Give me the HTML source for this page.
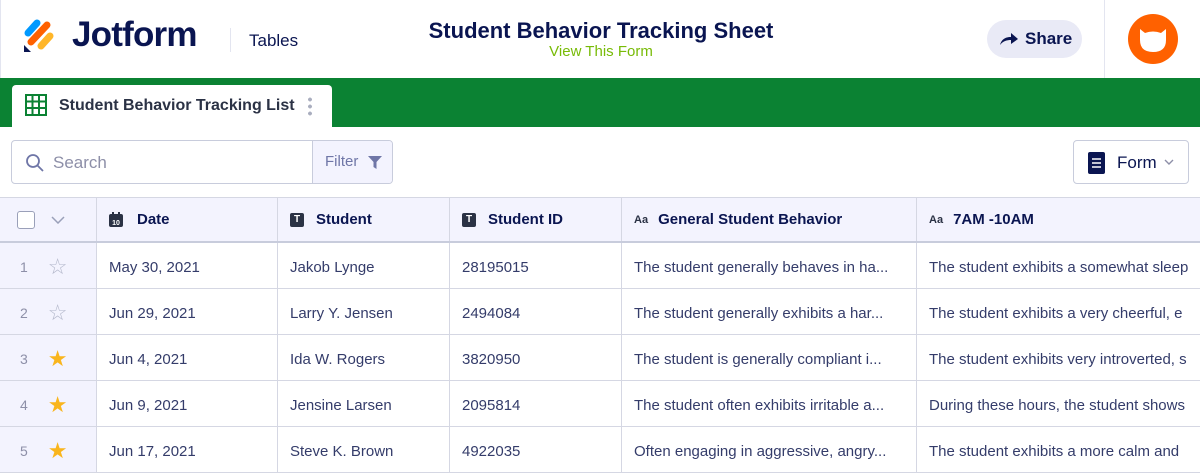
<!DOCTYPE html>
<html><head><meta charset="utf-8"><style>
*{box-sizing:border-box;margin:0;padding:0}
body{width:1200px;height:474px;overflow:hidden;background:#fff;font-family:"Liberation Sans",sans-serif;color:#0a1551;position:relative}
.hdr{position:absolute;left:0;top:0;width:1200px;height:78px;background:#fff;border-left:1px solid #e3e5f0}
.green{position:absolute;left:0;top:78px;width:1200px;height:49px;background:#0b8233}
.tab{position:absolute;left:12px;top:85px;width:320px;height:42px;background:#fff;border-radius:4px 4px 0 0}
.tbl{position:absolute;left:0;top:197px;width:1200px}
.row{position:absolute;left:0;width:1200px;height:46px;border-bottom:1px solid #d5d7e3;display:flex}
.c{height:100%;border-right:1px solid #d5d7e3;display:flex;align-items:center;padding-left:12px;padding-top:3px;font-size:15px;color:#343c6a;white-space:nowrap;overflow:hidden}
.h .c{font-weight:bold;color:#0a1551;font-size:15px;padding-top:0}
.ti{display:inline-block;width:14px;height:14px;background:#2b3245;color:#fff;font-size:10px;font-weight:bold;text-align:center;line-height:14px;border-radius:2px;margin-right:12px}
</style></head><body>
<div class="hdr">
  <svg style="position:absolute;left:22px;top:19px" width="34" height="34" viewBox="0 0 34 34">
    <line x1="5" y1="14" x2="14" y2="4" stroke="#0099ff" stroke-width="7" stroke-linecap="round"/>
    <line x1="8" y1="23" x2="24" y2="6" stroke="#ff6100" stroke-width="7" stroke-linecap="round"/>
    <line x1="18" y1="27" x2="27" y2="17" stroke="#ffb629" stroke-width="7" stroke-linecap="round"/>
    <path d="M1 26 L1 33 L8 33 Z" fill="#0a1551"/>
  </svg>
  <div style="position:absolute;left:71px;top:15px;font-size:35px;font-weight:bold;color:#0a1551;letter-spacing:-0.8px">Jotform</div>
  <div style="position:absolute;left:229px;top:28px;width:1px;height:24px;background:#e3e5f0"></div>
  <div style="position:absolute;left:248px;top:31px;font-size:17px;color:#0a1551">Tables</div>
  <div style="position:absolute;left:0;width:1200px;top:18px;text-align:center;font-size:22px;font-weight:bold;color:#0a1551">Student Behavior Tracking Sheet</div>
  <div style="position:absolute;left:0;width:1200px;top:43px;text-align:center;font-size:15px;color:#78bb07">View This Form</div>
  <div style="position:absolute;left:986px;top:20px;width:95px;height:38px;border-radius:19px;background:#e9eaf6;font-size:17px;font-weight:bold;color:#0a1551;line-height:38px;padding-left:38px">Share
    <svg style="position:absolute;left:12px;top:12px" width="20" height="14" viewBox="0 0 20 14"><path d="M1 13 C3 6 8 5 12 5 L12 1 L19 7 L12 12 L12 8 C8 8 4 9 1 13Z" fill="#0a1551"/></svg>
  </div>
  <div style="position:absolute;left:1103px;top:0;width:1px;height:78px;background:#e3e5f0"></div>
  <svg style="position:absolute;left:1127px;top:14px" width="50" height="50" viewBox="0 0 50 50"><circle cx="25" cy="25" r="25" fill="#ff6100"/><path d="M12 15 L17 19 Q25 16 33 19 L38 15 L38 26 Q38 38 25 38 Q12 38 12 26Z" fill="#fff"/></svg>
</div>
<div class="green"></div>
<div class="tab">
  <svg style="position:absolute;left:13px;top:9px" width="22" height="22" viewBox="0 0 22 22"><rect x="1" y="1" width="20" height="20" fill="none" stroke="#0b8233" stroke-width="2"/><path d="M1 7.5H21M1 14H21M7.5 1V21M14 1V21" stroke="#0b8233" stroke-width="2"/></svg>
  <div style="position:absolute;left:47px;top:12px;font-size:16px;font-weight:bold;color:#2b3245">Student Behavior Tracking List</div>
  <div style="position:absolute;left:296px;top:11px;width:4px;height:20px;background:radial-gradient(circle,#aaaebf 1.8px,transparent 2px) 0 0/4px 7px"></div>
</div>
<div style="position:absolute;left:11px;top:140px;width:382px;height:44px;border:1px solid #c8ccdc;border-radius:4px;background:#fff;overflow:hidden">
  <svg style="position:absolute;left:13px;top:12px" width="20" height="20" viewBox="0 0 20 20"><circle cx="8" cy="8" r="6" fill="none" stroke="#6f76a7" stroke-width="1.8"/><path d="M12.5 12.5L18 18" stroke="#6f76a7" stroke-width="1.8"/></svg>
  <div style="position:absolute;left:41px;top:12px;font-size:17px;color:#8d8fa8">Search</div>
  <div style="position:absolute;left:300px;top:0;width:81px;height:42px;border-left:1px solid #c8ccdc;background:#f3f3fe;font-size:15px;color:#6f76a7;line-height:42px;padding-left:12px">Filter
    <svg style="position:absolute;left:55px;top:15px" width="14" height="13" viewBox="0 0 14 13"><path d="M0 0H14L8.5 6V13L5.5 11V6Z" fill="#6f76a7"/></svg>
  </div>
</div>
<div style="position:absolute;left:1073px;top:140px;width:116px;height:44px;border:1px solid #c8ccdc;border-radius:4px;background:#fff">
  <svg style="position:absolute;left:14px;top:11px" width="17" height="22" viewBox="0 0 17 22"><rect width="17" height="22" rx="2" fill="#0a1551"/><path d="M4 7H13M4 11H13M4 15H13" stroke="#fff" stroke-width="1.6"/></svg>
  <div style="position:absolute;left:43px;top:12px;font-size:17px;color:#0a1551">Form</div>
  <svg style="position:absolute;left:90px;top:18px" width="10" height="6" viewBox="0 0 10 6"><path d="M1 1L5 5L9 1" fill="none" stroke="#8d8fa8" stroke-width="1.4"/></svg>
</div>
<div class="tbl">
  <div class="row h" style="top:0;height:46px;background:#f3f3fe;border-top:1px solid #d5d7e3;border-bottom:2px solid #c8ccdc">
    <div class="c" style="width:97px;padding-left:17px"><span style="width:18px;height:18px;border:1.5px solid #9aa0b9;border-radius:3px;background:#fff;display:inline-block"></span><svg style="margin-left:16px" width="14" height="8" viewBox="0 0 14 8"><path d="M1 1L7 7L13 1" fill="none" stroke="#9aa0b9" stroke-width="1.5"/></svg></div>
    <div class="c" style="width:181px"><svg width="14" height="15" viewBox="0 0 14 15" style="margin-right:14px"><rect y="2" width="14" height="13" rx="2" fill="#2b3245"/><rect x="3" width="2" height="4" fill="#2b3245"/><rect x="9" width="2" height="4" fill="#2b3245"/><text x="7" y="13" font-size="7" fill="#fff" text-anchor="middle" font-family="Liberation Sans">10</text></svg>Date</div>
    <div class="c" style="width:172px"><span class="ti">T</span>Student</div>
    <div class="c" style="width:172px"><span class="ti">T</span>Student ID</div>
    <div class="c" style="width:295px"><span style="font-size:11px;margin-right:10px;color:#2b3245">Aa</span>General Student Behavior</div>
    <div class="c" style="width:283px;border-right:0"><span style="font-size:11px;margin-right:10px;color:#2b3245">Aa</span>7AM -10AM</div>
  </div>
</div>
<div style="position:absolute;left:0;top:243px;width:1200px">
  <div class="row" style="top:0"><div class="c" style="width:97px;background:#f3f3fe;color:#8d8fa8;padding-left:20px;font-size:14px">1<span style="margin-left:20px;font-size:22px;color:#b5b9cc">☆</span></div><div class="c" style="width:181px">May 30, 2021</div><div class="c" style="width:172px">Jakob Lynge</div><div class="c" style="width:172px">28195015</div><div class="c" style="width:295px">The student generally behaves in ha...</div><div class="c" style="width:283px;border-right:0">The student exhibits a somewhat sleep</div></div>
  <div class="row" style="top:46px"><div class="c" style="width:97px;background:#f3f3fe;color:#8d8fa8;padding-left:20px;font-size:14px">2<span style="margin-left:20px;font-size:22px;color:#b5b9cc">☆</span></div><div class="c" style="width:181px">Jun 29, 2021</div><div class="c" style="width:172px">Larry Y. Jensen</div><div class="c" style="width:172px">2494084</div><div class="c" style="width:295px">The student generally exhibits a har...</div><div class="c" style="width:283px;border-right:0">The student exhibits a very cheerful, e</div></div>
  <div class="row" style="top:92px"><div class="c" style="width:97px;background:#f3f3fe;color:#8d8fa8;padding-left:20px;font-size:14px">3<span style="margin-left:20px;font-size:22px;color:#f9b51d">★</span></div><div class="c" style="width:181px">Jun 4, 2021</div><div class="c" style="width:172px">Ida W. Rogers</div><div class="c" style="width:172px">3820950</div><div class="c" style="width:295px">The student is generally compliant i...</div><div class="c" style="width:283px;border-right:0">The student exhibits very introverted, s</div></div>
  <div class="row" style="top:138px"><div class="c" style="width:97px;background:#f3f3fe;color:#8d8fa8;padding-left:20px;font-size:14px">4<span style="margin-left:20px;font-size:22px;color:#f9b51d">★</span></div><div class="c" style="width:181px">Jun 9, 2021</div><div class="c" style="width:172px">Jensine Larsen</div><div class="c" style="width:172px">2095814</div><div class="c" style="width:295px">The student often exhibits irritable a...</div><div class="c" style="width:283px;border-right:0">During these hours, the student shows</div></div>
  <div class="row" style="top:184px"><div class="c" style="width:97px;background:#f3f3fe;color:#8d8fa8;padding-left:20px;font-size:14px">5<span style="margin-left:20px;font-size:22px;color:#f9b51d">★</span></div><div class="c" style="width:181px">Jun 17, 2021</div><div class="c" style="width:172px">Steve K. Brown</div><div class="c" style="width:172px">4922035</div><div class="c" style="width:295px">Often engaging in aggressive, angry...</div><div class="c" style="width:283px;border-right:0">The student exhibits a more calm and</div></div>
</div>
</body></html>
